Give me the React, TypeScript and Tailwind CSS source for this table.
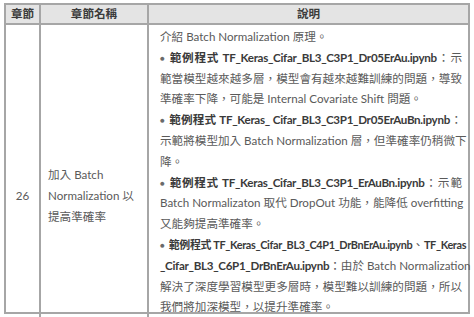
const FONT = "font-['Lato','Noto_Sans_CJK_TC',sans-serif]";

type Seg = { t: string; b?: boolean };
type Line = { segs: Seg[]; bullet?: boolean; fill?: boolean; tight?: boolean };

const LINES: Line[] = [
  { segs: [{ t: "介紹 Batch Normalization 原理。" }] },
  {
    bullet: true,
    fill: true,
    segs: [{ t: "範例程式 TF_Keras_Cifar_BL3_C3P1_Dr05ErAu.ipynb", b: true }, { t: "：示" }],
  },
  { fill: true, segs: [{ t: "範當模型越來越多層，模型會有越來越難訓練的問題，導致" }] },
  { segs: [{ t: "準確率下降，可能是 Internal Covariate Shift 問題。" }] },
  {
    bullet: true,
    fill: true,
    segs: [{ t: "範例程式 TF_Keras_ Cifar_BL3_C3P1_Dr05ErAuBn.ipynb", b: true }, { t: "：" }],
  },
  { fill: true, segs: [{ t: "示範將模型加入 Batch Normalization 層，但準確率仍稍微下" }] },
  { segs: [{ t: "降。" }] },
  {
    bullet: true,
    fill: true,
    segs: [{ t: "範例程式 TF_Keras_Cifar_BL3_C3P1_ErAuBn.ipynb", b: true }, { t: "：示範" }],
  },
  { fill: true, segs: [{ t: "Batch Normalizaton 取代 DropOut 功能，能降低 overfitting" }] },
  { segs: [{ t: "又能夠提高準確率。" }] },
  {
    bullet: true,
    fill: true,
    tight: true,
    segs: [
      { t: "範例程式 TF_Keras_Cifar_BL3_C4P1_DrBnErAu.ipynb", b: true },
      { t: "、" },
      { t: "TF_Keras", b: true },
    ],
  },
  {
    fill: true,
    segs: [{ t: "_Cifar_BL3_C6P1_DrBnErAu.ipynb", b: true }, { t: "：由於 Batch Normalization" }],
  },
  { fill: true, segs: [{ t: "解決了深度學習模型更多層時，模型難以訓練的問題，所以" }] },
  { segs: [{ t: "我們將加深模型，以提升準確率。" }] },
];

export default function App() {
  return (
    <div className={`${FONT} w-[474px] h-[317px] bg-white pt-[3px] pl-[4px] overflow-hidden`}>
      <div className="w-[466px] border-2 border-[#a6a6a6] text-[11.6px] text-[#5a5a5a]">
        {/* header */}
        <div className="grid grid-cols-[35px_108px_minmax(0,1fr)] h-[20px] bg-[#e4e4e4] border-b-2 border-[#a6a6a6] text-[#3c3c3c] font-bold leading-[18px]">
          <div className="text-center border-r-2 border-[#a6a6a6]">章節</div>
          <div className="text-center border-r-2 border-[#a6a6a6]">章節名稱</div>
          <div className="text-center">說明</div>
        </div>

        {/* body row */}
        <div className="grid grid-cols-[35px_108px_minmax(0,1fr)] h-[287px]">
          <div className="flex flex-col justify-center pt-[50px] text-center border-r-2 border-[#a6a6a6] leading-[20.8px]">
            26
          </div>
          <div className="flex flex-col justify-center pt-[50px] pl-[7px] pr-[4px] border-r-2 border-[#a6a6a6] leading-[20.8px]">
            <div>加入 Batch</div>
            <div>Normalization 以</div>
            <div>提高準確率</div>
          </div>
          <div className="min-w-0 pl-[11px] pr-[6px] pt-[2px] leading-[20.8px]">
            {LINES.map((line, i) => (
              <div
                key={i}
                className={`whitespace-nowrap ${line.fill ? "[text-align-last:justify] text-justify" : ""}`}
              >
                {line.bullet && <span className="text-[#6a6a6a] mr-[4px] text-[8px] align-[1px]">●</span>}
                {line.segs.map((s, j) => (
                  <span
                    key={j}
                    className={
                      s.b
                        ? line.tight
                          ? "font-bold text-[#3a3a3a] text-[10.9px] tracking-[-0.35px]"
                          : "font-bold text-[#3a3a3a] tracking-[-0.3px]"
                        : ""
                    }
                  >
                    {s.t}
                  </span>
                ))}
              </div>
            ))}
          </div>
        </div>
      </div>
    </div>
  );
}
